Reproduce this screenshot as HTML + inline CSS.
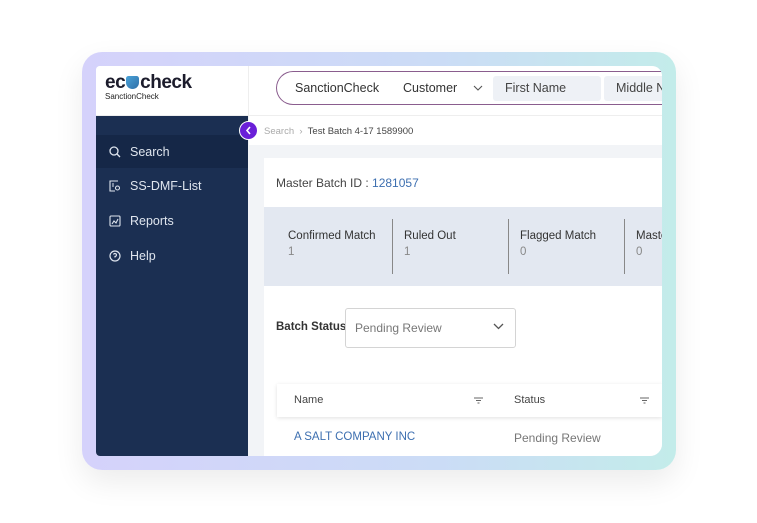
<!DOCTYPE html><html><head><style>
*{margin:0;padding:0;box-sizing:border-box}
body{width:757px;height:523px;background:#fff;font-family:"Liberation Sans",sans-serif;position:relative;overflow:hidden}
.a{position:absolute}
.frame{left:82px;top:52px;width:594px;height:418px;border-radius:20px;background:linear-gradient(90deg,#d5d2fb,#cbdcf6 60%,#c3ecea);box-shadow:0 12px 30px rgba(0,0,0,.08)}
.screen{left:96px;top:66px;width:566px;height:390px;border-radius:4px 10px 12px 4px;overflow:hidden;background:#f2f4f7}
.side{left:0;top:50px;width:152px;height:340px;background:#1b2f52}
.nav{position:absolute;left:0;width:152px;height:33px;color:#dfe5ee;font-size:12.5px;line-height:33px;padding-left:34px}
.ic{position:absolute;left:13px;top:10px;width:12px;height:12px}
</style></head><body>
<div class="a frame"></div>
<div class="a screen">
 <div class="a" style="left:0;top:0;width:566px;height:50px;background:#fff;border-bottom:1px solid #eee"></div>
 <div class="a" style="left:152px;top:0;width:1px;height:50px;background:#eee"></div>
 <div class="a" style="left:9px;top:6px;font-size:19px;font-weight:bold;color:#1c1c2c;letter-spacing:-.5px">ec<span style="display:inline-block;width:13px;height:13px;border-radius:3px 3px 8px 8px;background:linear-gradient(135deg,#4aa3d8,#2f6fa8);vertical-align:-1px;margin:0 1px"></span>check</div>
 <div class="a" style="left:9px;top:26px;font-size:8px;color:#222">SanctionCheck</div>
 <div class="a" style="left:180px;top:5px;width:400px;height:34px;border:1px solid #8a5d8e;border-radius:17px 0 0 17px;border-right:none"></div>
 <div class="a" style="left:199px;top:15px;font-size:12.5px;color:#333">SanctionCheck</div>
 <div class="a" style="left:307px;top:15px;font-size:12.5px;color:#333">Customer</div>
 <svg class="a" style="left:377px;top:19px" width="10" height="6" viewBox="0 0 10 6" fill="none" stroke="#555" stroke-width="1.1"><path d="M1 1l4 4 4-4"/></svg>
 <div class="a" style="left:397px;top:10px;width:108px;height:25px;background:#eef1f6;border-radius:3px"></div>
 <div class="a" style="left:409px;top:15px;font-size:12.5px;color:#444">First Name</div>
 <div class="a" style="left:508px;top:10px;width:70px;height:25px;background:#eef1f6;border-radius:3px"></div>
 <div class="a" style="left:520px;top:15px;font-size:12.5px;color:#444;white-space:nowrap">Middle N</div>
 <div class="a side"></div>
 <div class="a" style="left:0;top:69px;width:152px;height:33px;background:#152747"></div>
 <div class="nav" style="top:70px"><svg class="ic" viewBox="0 0 12 12" fill="none" stroke="#dfe5ee" stroke-width="1.3"><circle cx="5" cy="5" r="4"/><path d="M8 8l3 3"/></svg>Search</div>
 <div class="nav" style="top:104px"><svg class="ic" viewBox="0 0 12 12" fill="none" stroke="#dfe5ee" stroke-width="1.1"><path d="M9 1H1v10h5"/><circle cx="8.5" cy="8" r="2"/><path d="M3 4h2M3 6h2"/></svg>SS-DMF-List</div>
 <div class="nav" style="top:139px"><svg class="ic" viewBox="0 0 12 12" fill="none" stroke="#dfe5ee" stroke-width="1.1"><rect x="1" y="1" width="10" height="10" rx="1"/><path d="M3 9l2-3 2 2 2-4"/></svg>Reports</div>
 <div class="nav" style="top:174px"><svg class="ic" viewBox="0 0 12 12" fill="none" stroke="#dfe5ee" stroke-width="1.2"><circle cx="6" cy="6" r="5"/><path d="M4.5 4.5a1.5 1.5 0 1 1 1.5 2v1"/></svg>Help</div>
 <div class="a" style="left:153px;top:50px;width:413px;height:29px;background:#fff"></div>
 <div class="a" style="left:143px;top:55px;width:19px;height:19px;border-radius:50%;background:#6a1fd8;border:1.5px solid #fff"></div>
 <svg class="a" style="left:149px;top:60px" width="7" height="9" viewBox="0 0 7 9" fill="none" stroke="#fff" stroke-width="1.6"><path d="M5 1L2 4.5 5 8"/></svg>
 <div class="a" style="left:168px;top:60px;font-size:9.5px;color:#aaa">Search &nbsp;&rsaquo;&nbsp; <span style="color:#444">Test Batch 4-17 1589900</span></div>
 <div class="a" style="left:168px;top:92px;width:398px;height:298px;background:#fff"></div>
 <div class="a" style="left:180px;top:110px;font-size:12px;color:#444">Master Batch ID : <span style="color:#3d6fb0">1281057</span></div>
 <div class="a" style="left:168px;top:141px;width:398px;height:79px;background:#e3e8f1"></div>
 <div class="a" style="left:296px;top:153px;width:1px;height:55px;background:#888"></div>
 <div class="a" style="left:412px;top:153px;width:1px;height:55px;background:#888"></div>
 <div class="a" style="left:528px;top:153px;width:1px;height:55px;background:#888"></div>
 <div class="a" style="left:192px;top:162px;font-size:11.5px;color:#333;line-height:16px">Confirmed Match<br><span style="color:#888">1</span></div>
 <div class="a" style="left:308px;top:162px;font-size:11.5px;color:#333;line-height:16px">Ruled Out<br><span style="color:#888">1</span></div>
 <div class="a" style="left:424px;top:162px;font-size:11.5px;color:#333;line-height:16px">Flagged Match<br><span style="color:#888">0</span></div>
 <div class="a" style="left:540px;top:162px;font-size:11.5px;color:#333;line-height:16px;white-space:nowrap">Master<br><span style="color:#888">0</span></div>
 <div class="a" style="left:180px;top:255px;font-size:11.5px;color:#333;font-weight:bold">Batch Status</div>
 <div class="a" style="left:249px;top:242px;width:171px;height:40px;border:1px solid #d4d4d4;border-radius:3px"></div>
 <div class="a" style="left:259px;top:255px;font-size:12px;color:#777">Pending Review</div>
 <svg class="a" style="left:397px;top:257px" width="11" height="7" viewBox="0 0 11 7" fill="none" stroke="#555" stroke-width="1.3"><path d="M1 1l4.5 4.5L10 1"/></svg>
 <div class="a" style="left:181px;top:318px;width:385px;height:33px;background:#fff;box-shadow:0 1px 4px rgba(0,0,0,.12)"></div>
 <div class="a" style="left:198px;top:328px;font-size:11px;color:#444">Name</div>
 <div class="a" style="left:418px;top:328px;font-size:11px;color:#444">Status</div>
 <svg class="a" style="left:378px;top:331px" width="9" height="7" viewBox="0 0 9 7" stroke="#666" stroke-width="1"><path d="M0 1h9M2 3.5h5M3.5 6h2"/></svg>
 <svg class="a" style="left:544px;top:331px" width="9" height="7" viewBox="0 0 9 7" stroke="#666" stroke-width="1"><path d="M0 1h9M2 3.5h5M3.5 6h2"/></svg>
 <div class="a" style="left:198px;top:365px;font-size:11.5px;color:#3d6fb0">A SALT COMPANY INC</div>
 <div class="a" style="left:418px;top:365px;font-size:12px;color:#777">Pending Review</div>
</div>
</body></html>
